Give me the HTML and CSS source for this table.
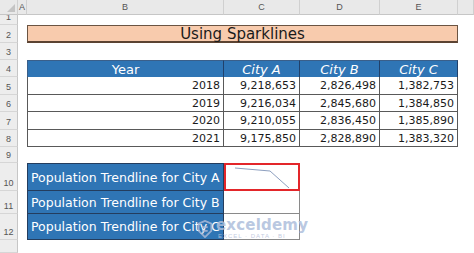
FILE: index.html
```html
<!DOCTYPE html>
<html>
<head>
<meta charset="utf-8">
<link rel="stylesheet" href="styles.css">
</head>
<body>
<div class="sheet">
  <!-- header row -->
  <div class="ch corner"><span class="tri"></span></div>
  <div class="ch">A</div>
  <div class="ch">B</div>
  <div class="ch">C</div>
  <div class="ch">D</div>
  <div class="ch">E</div>
  <div class="ch"></div>

  <!-- row 1 -->
  <div class="rh">1</div><div class="c"></div><div class="c"></div><div class="c"></div><div class="c"></div><div class="c"></div><div class="c"></div>
  <!-- row 2 -->
  <div class="rh">2</div><div class="c"></div>
  <div class="title">Using Sparklines</div>
  <div class="c"></div>
  <!-- row 3 -->
  <div class="rh">3</div><div class="c"></div><div class="c"></div><div class="c"></div><div class="c"></div><div class="c"></div><div class="c"></div>
  <!-- row 4 -->
  <div class="rh">4</div><div class="c"></div>
  <div class="th first">Year</div>
  <div class="th it">City A</div>
  <div class="th it">City B</div>
  <div class="th it">City C</div>
  <div class="c"></div>
  <!-- row 5 -->
  <div class="rh">5</div><div class="c"></div>
  <div class="td first">2018</div><div class="td">9,218,653</div><div class="td">2,826,498</div><div class="td">1,382,753</div>
  <div class="c"></div>
  <!-- row 6 -->
  <div class="rh">6</div><div class="c"></div>
  <div class="td first">2019</div><div class="td">9,216,034</div><div class="td">2,845,680</div><div class="td">1,384,850</div>
  <div class="c"></div>
  <!-- row 7 -->
  <div class="rh">7</div><div class="c"></div>
  <div class="td first">2020</div><div class="td">9,210,055</div><div class="td">2,836,450</div><div class="td">1,385,890</div>
  <div class="c"></div>
  <!-- row 8 -->
  <div class="rh">8</div><div class="c"></div>
  <div class="td first">2021</div><div class="td">9,175,850</div><div class="td">2,828,890</div><div class="td">1,383,320</div>
  <div class="c"></div>
  <!-- row 9 -->
  <div class="rh">9</div><div class="c"></div><div class="c"></div><div class="c"></div><div class="c"></div><div class="c"></div><div class="c"></div>
  <!-- row 10 -->
  <div class="rh">10</div><div class="c"></div>
  <div class="lbl top">Population Trendline for City A</div>
  <div class="spark top">
    <svg viewBox="0 0 76 28" width="76" height="28"><polyline points="11,5 46,8 65,25" fill="none" stroke="#8d9fbf" stroke-width="1"/></svg>
  </div>
  <div class="c"></div><div class="c"></div><div class="c"></div>
  <!-- row 11 -->
  <div class="rh">11</div><div class="c"></div>
  <div class="lbl">Population Trendline for City B</div>
  <div class="val"></div>
  <div class="c"></div><div class="c"></div><div class="c"></div>
  <!-- row 12 -->
  <div class="rh">12</div><div class="c"></div>
  <div class="lbl">Population Trendline for City C</div>
  <div class="val"></div>
  <div class="c"></div><div class="c"></div><div class="c"></div>
  <!-- row 13 -->
  <div class="rh"></div><div class="c"></div><div class="c"></div><div class="c"></div><div class="c"></div><div class="c"></div><div class="c"></div>
</div>

<div class="watermark">
  <svg class="wm-logo" viewBox="0 0 20 20" width="18" height="18"><path d="M3 4 L10 1 L17 4 L17 12 L10 19 L3 12 Z" fill="none" stroke="#a9b9d8" stroke-width="2"/><path d="M7 8 L13 8 M7 12 L13 12" stroke="#a9b9d8" stroke-width="2"/></svg>
  <div class="wm-text">
    <span class="wm-name">exceldemy</span>
    <span class="wm-sub">EXCEL · DATA · BI</span>
  </div>
</div>
</body>
</html>
```

FILE: styles.css
```css
html, body {
  margin: 0;
  padding: 0;
  background: #ffffff;
}
body {
  width: 474px;
  height: 253px;
  overflow: hidden;
  position: relative;
  font-family: "DejaVu Sans", "Noto Sans", sans-serif;
}
.sheet {
  display: grid;
  grid-template-columns: 18px 9px 197px 76px 80px 78px 16px;
  grid-template-rows: 15px 10px 18px 17px 17px 18px 17px 18px 17px 16px 28px 23px 26px 13px;
}
.ch {
  background: #e9e9e9;
  border-right: 1px solid #d0d0d0;
  border-bottom: 1px solid #c6c6c6;
  font-family: "Liberation Sans", Arial, sans-serif;
  font-size: 9px;
  color: #555;
  display: flex;
  align-items: center;
  justify-content: center;
  box-sizing: border-box;
}
.corner {
  position: relative;
}
.tri {
  position: absolute;
  right: 2px;
  bottom: 2px;
  width: 0;
  height: 0;
  border-left: 8px solid transparent;
  border-bottom: 8px solid #c4c4c4;
}
.rh {
  background: #ededed;
  border-right: 1px solid #c6c6c6;
  border-bottom: 1px solid #d6d6d6;
  font-family: "Liberation Sans", Arial, sans-serif;
  font-size: 9px;
  color: #555;
  display: flex;
  align-items: flex-end;
  justify-content: center;
  padding-bottom: 2px;
  box-sizing: border-box;
}
.c {
  background: #fff;
}
.title {
  grid-column: 3 / span 4;
  background: #f8cbad;
  border: 1px solid #6b5442;
  border-bottom: 2px solid #5b4332;
  box-sizing: border-box;
  display: flex;
  align-items: center;
  justify-content: center;
  font-size: 15px;
  color: #1a1a1a;
}
.th {
  background: #2f75b5;
  color: #fff;
  font-size: 13px;
  display: flex;
  align-items: center;
  justify-content: center;
  border-top: 1px solid #3a5f8a;
  border-right: 1px solid #20406a;
  box-sizing: border-box;
}
.th.first {
  border-left: 1px solid #3a5f8a;
}
.th.it {
  font-style: italic;
}
.td {
  background: #fff;
  color: #1a1a1a;
  font-size: 11px;
  display: flex;
  align-items: center;
  justify-content: flex-end;
  padding-right: 3px;
  border-right: 1px solid #595959;
  border-bottom: 1px solid #595959;
  box-sizing: border-box;
}
.td.first {
  border-left: 1px solid #595959;
}
.lbl {
  background: #2f75b5;
  color: #fff;
  font-size: 12.5px;
  display: flex;
  align-items: center;
  padding-left: 3px;
  white-space: nowrap;
  border-left: 1px solid #243d5e;
  border-right: 1px solid #243d5e;
  border-bottom: 1px solid #243d5e;
  box-sizing: border-box;
}
.lbl.top {
  border-top: 1px solid #243d5e;
}
.val {
  background: #fff;
  border-right: 1px solid #8a8a8a;
  border-bottom: 1px solid #8a8a8a;
  box-sizing: border-box;
}
.spark {
  background: #fff;
  border: 2px solid #e3262a;
  box-sizing: border-box;
  position: relative;
  overflow: hidden;
}
.spark svg {
  position: absolute;
  left: -2px;
  top: -2px;
}
.watermark {
  position: absolute;
  left: 196px;
  top: 218px;
  display: flex;
  align-items: center;
  gap: 2px;
  opacity: 0.85;
}
.wm-text {
  display: flex;
  flex-direction: column;
  line-height: 1;
}
.wm-name {
  font-family: "DejaVu Sans", sans-serif;
  font-weight: bold;
  font-size: 15px;
  color: #aebfdc;
  letter-spacing: 0.2px;
}
.wm-sub {
  font-family: "Liberation Sans", sans-serif;
  font-size: 6px;
  color: #b9c5dc;
  letter-spacing: 1px;
  padding-left: 2px;
}
```
